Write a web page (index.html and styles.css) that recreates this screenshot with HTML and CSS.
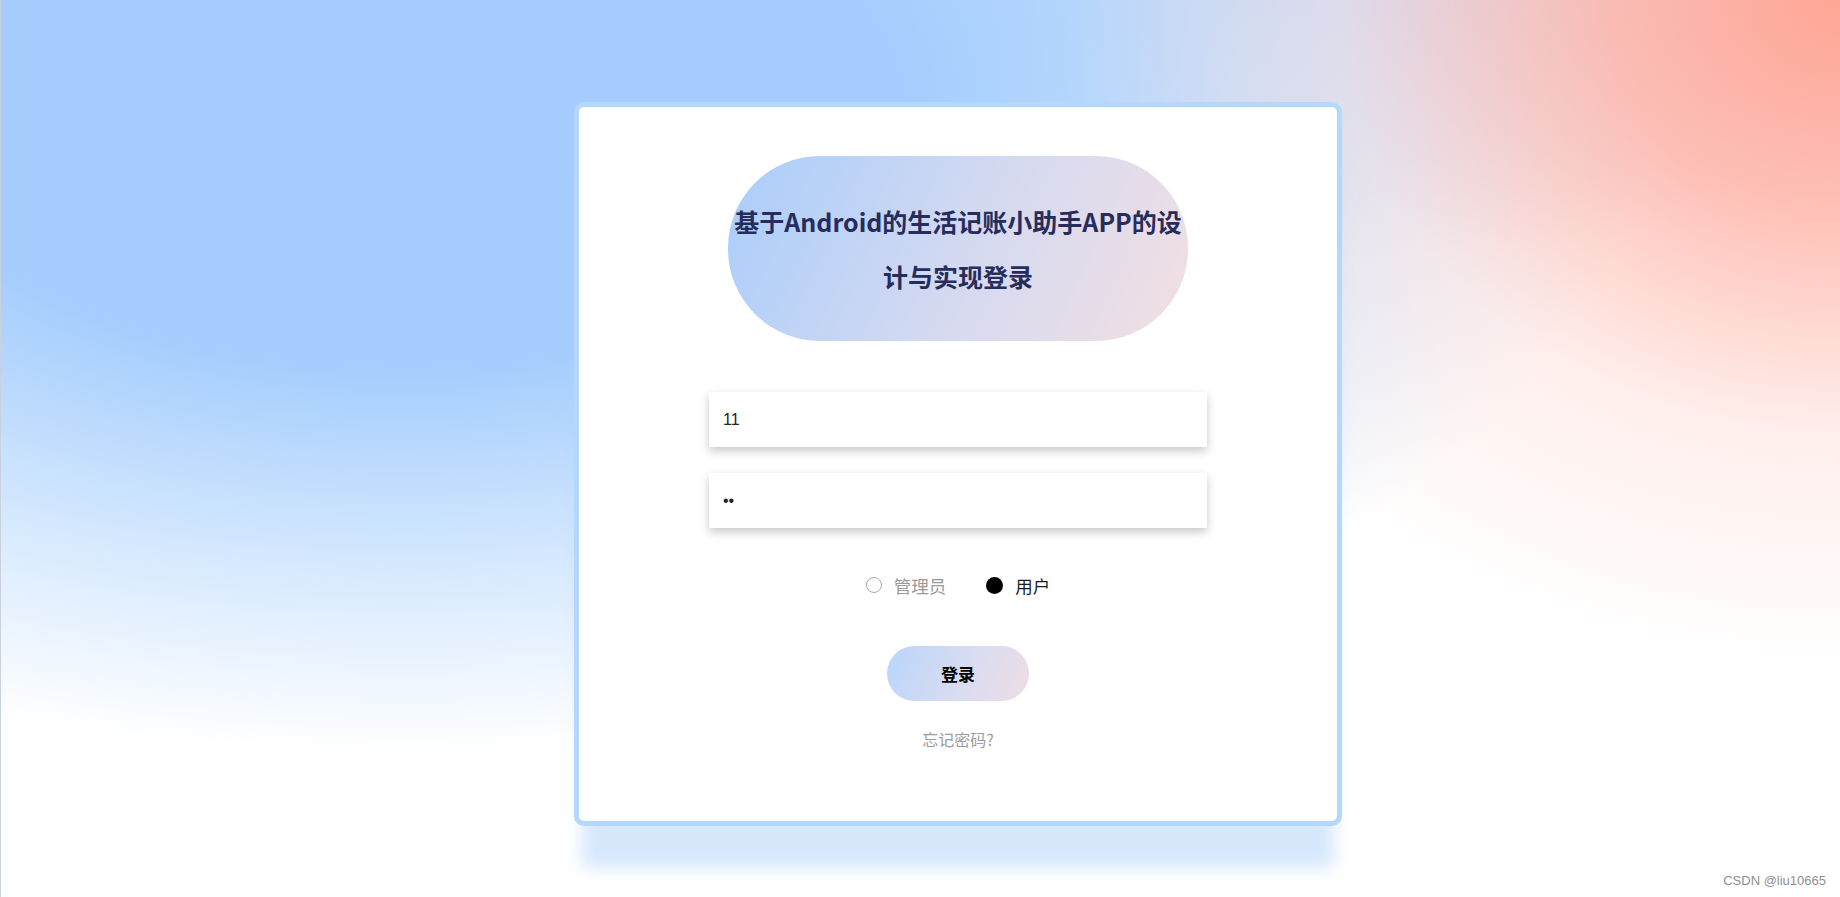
FILE: index.html
```html
<!DOCTYPE html>
<html lang="zh-CN">
<head>
    <meta charset="UTF-8">
    <meta name="viewport" content="width=device-width, initial-scale=1.0">
    <title>登录</title>
    <link rel="stylesheet" href="styles.css">
</head>
<body>
    <div class="page">
        <div class="login-box">
            <div class="title-pill">
                <h1>基于Android的生活记账小助手APP的设计与实现登录</h1>
            </div>
            <form class="login-form" onsubmit="return false">
                <input type="text" class="field" value="11">
                <input type="password" class="field" value="11">
                <div class="roles">
                    <label class="role">
                        <span class="dot"></span>
                        <span class="role-name">管理员</span>
                    </label>
                    <label class="role active">
                        <span class="dot"></span>
                        <span class="role-name">用户</span>
                    </label>
                </div>
                <button type="submit" class="btn-login">登录</button>
                <a href="#" class="forgot">忘记密码?</a>
            </form>
        </div>
        <div class="watermark">CSDN @liu10665</div>
    </div>
</body>
</html>
```

FILE: styles.css
```css
html, body {
    margin: 0;
    padding: 0;
    height: 100%;
}

body {
    font-family: "Liberation Sans", "Noto Sans CJK SC", sans-serif;
    background-color: white;
}

.page {
    position: relative;
    box-sizing: border-box;
    height: 100%;
    border-left: 1px solid #c9d2dc;
    display: flex;
    justify-content: center;
    align-items: flex-start;
    padding-top: 102px;
    padding-left: 75px;
    background:
        radial-gradient(ellipse 42% 75% at 100% 0%, rgba(255, 166, 150, 1) 0%, rgba(255, 180, 168, 0.85) 30%, rgba(255, 215, 208, 0.4) 65%, rgba(255, 235, 232, 0) 100%),
        radial-gradient(ellipse 68% 72% at 22% 12%, #a4cdfd 0%, #a4cdfd 40%, rgba(185, 217, 253, 0.7) 66%, rgba(255, 255, 255, 0) 100%),
        linear-gradient(175deg, #bcd6fb 0%, #ffffff 36%);
}

/* tarjeta del login */
.login-box {
    box-sizing: border-box;
    width: 768px;
    background-color: white;
    border: 5px solid #b4d7fd;
    border-radius: 10px;
    padding: 49px 0 71px;
    display: flex;
    flex-direction: column;
    align-items: center;
    box-shadow: 0 50px 16px -8px rgba(175, 210, 252, 0.5);
}

.title-pill {
    box-sizing: border-box;
    width: 460px;
    height: 185px;
    border-radius: 92px;
    background: linear-gradient(115deg, #a9cdfb 0%, #d6daf0 55%, #f3dfe2 100%);
    display: flex;
    align-items: center;
    justify-content: center;
}

.title-pill h1 {
    margin: 0;
    width: 460px;
    font-family: "Noto Sans CJK SC", sans-serif;
    font-size: 25px;
    font-weight: bold;
    line-height: 55px;
    color: #262c5c;
    text-align: center;
}

.login-form {
    display: flex;
    flex-direction: column;
    align-items: center;
    margin-top: 51px;
}

.field {
    box-sizing: border-box;
    width: 498px;
    height: 55px;
    border: none;
    outline: none;
    padding: 0 14px;
    margin-bottom: 26px;
    font-family: "Liberation Sans", sans-serif;
    font-size: 16px;
    color: #222;
    background-color: white;
    box-shadow: 0 4px 9px rgba(0, 0, 0, 0.22);
}

.roles {
    display: flex;
    align-items: center;
    gap: 40px;
    margin-top: 20px;
    height: 22px;
}

.role {
    display: flex;
    align-items: center;
    gap: 12px;
    font-family: "Noto Sans CJK SC", sans-serif;
    font-size: 17.5px;
    color: #9a9a9a;
    cursor: pointer;
}

.role .dot {
    box-sizing: border-box;
    width: 16px;
    height: 16px;
    border-radius: 50%;
    border: 1px solid #a8a8a8;
    background-color: white;
}

.role.active {
    color: #1c1c1c;
}

.role.active .dot {
    width: 17px;
    height: 17px;
    border: none;
    background-color: black;
}

.btn-login {
    margin-top: 50px;
    width: 142px;
    height: 55px;
    border: none;
    border-radius: 28px;
    background: linear-gradient(115deg, #b9d5fb 0%, #d9dcf1 55%, #eedde5 100%);
    font-family: "Noto Sans CJK SC", sans-serif;
    font-size: 17px;
    font-weight: bold;
    color: black;
    cursor: pointer;
}

.forgot {
    margin-top: 27px;
    font-family: "Noto Sans CJK SC", sans-serif;
    font-size: 16px;
    line-height: 22px;
    color: #9c9c9c;
    text-decoration: none;
}

.watermark {
    position: absolute;
    right: 14px;
    bottom: 9px;
    font-size: 13px;
    color: #8f8f8f;
}
```
